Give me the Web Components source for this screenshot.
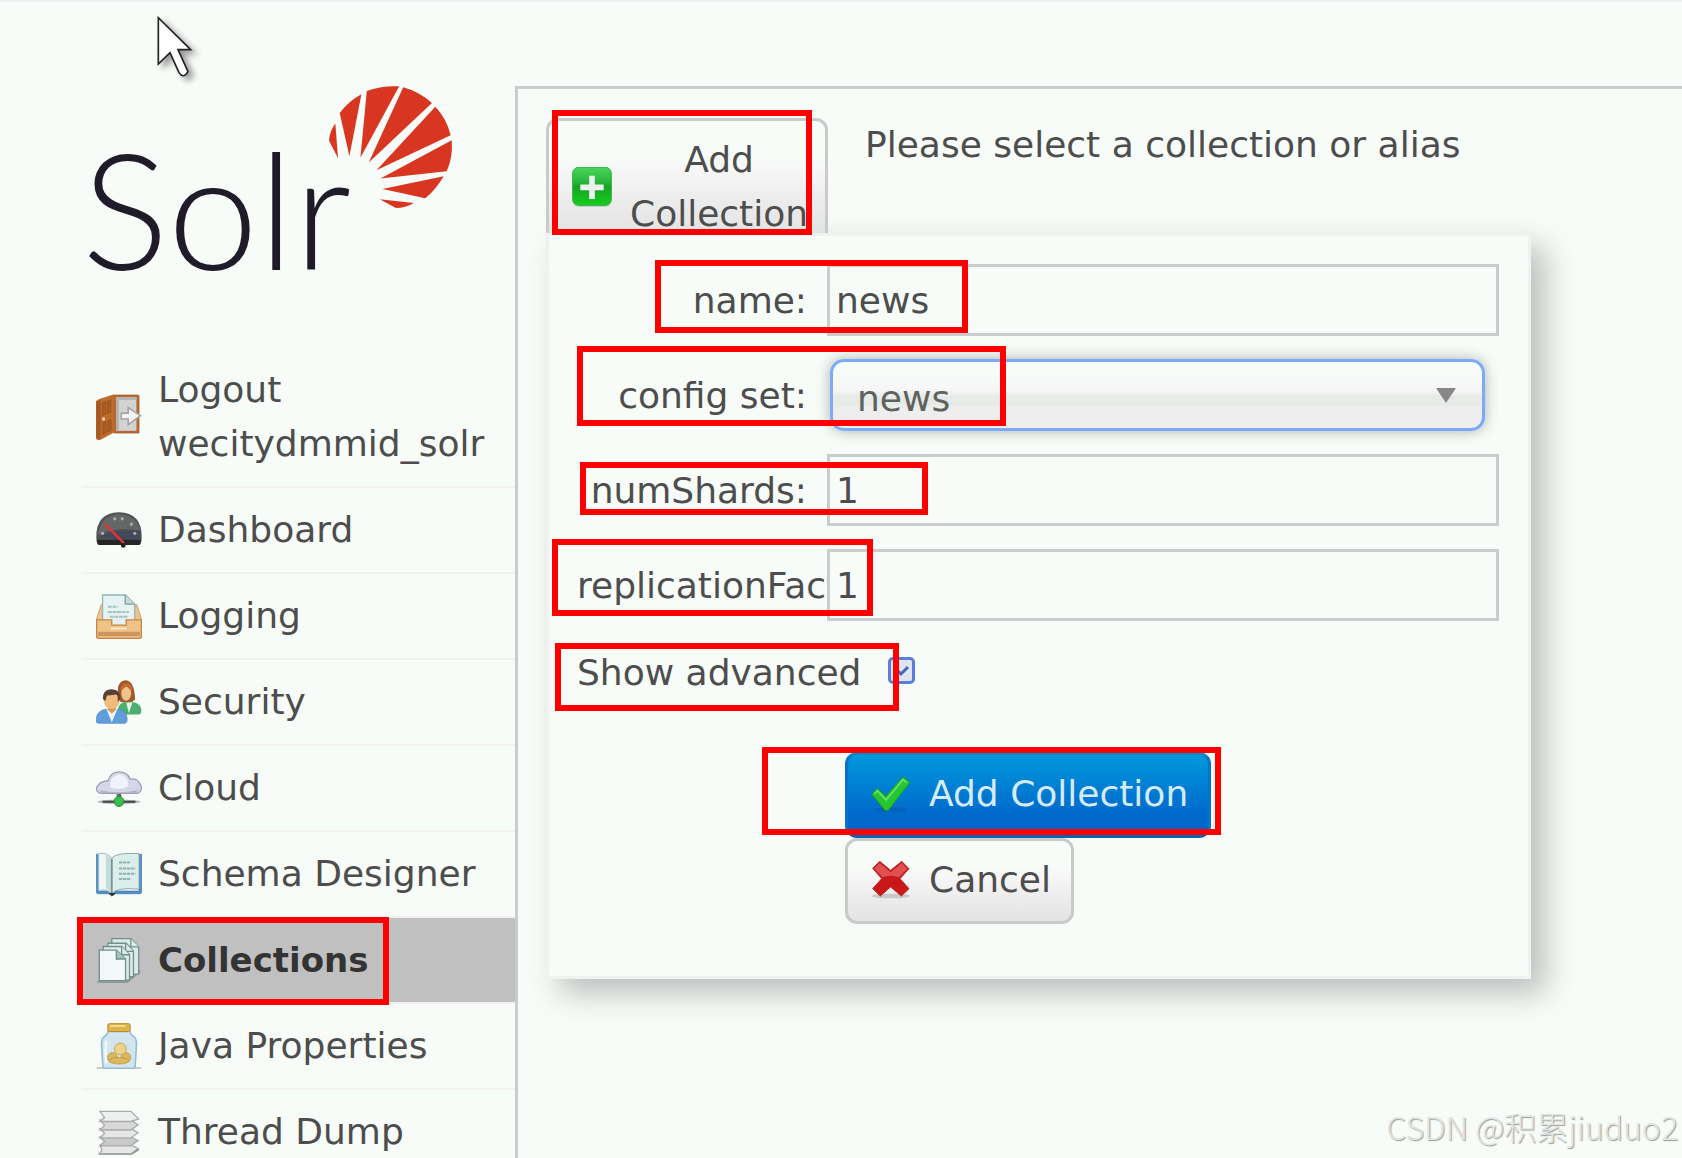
<!DOCTYPE html>
<html lang="en">
<head>
<meta charset="utf-8">
<title>Solr Admin</title>
<style>
  body {
    margin: 0;
    background: #f7fcf8;
    color: #4d4d4d;
    font: 36px/54px "DejaVu Sans", Verdana, sans-serif;
  }
</style>
</head>
<body>
<solr-app></solr-app>

<script>
const ICONS = {
  logout: `<svg viewBox="0 0 140 140">
    <path d="M55 3h72q4 0 4 4v112H55z" fill="#b86a34" stroke="#9a5527" stroke-width="2"/>
    <path d="M62 10h61v102H62z" fill="#d2d4d3"/>
    <path d="M62 10h61v8H70v94h-8z" fill="#b4b6b5"/>
    <path d="M0 22Q2 17 20 12L55 1v116L14 139q-14 3-14-5z" fill="#bd6b2b"/>
    <path d="M1 24L14 18v118q-12 4-13-4z" fill="#a55824"/>
    <path d="M20 26l10-3v38l-10 4zM35 21l10-3v38l-10 3zM21 88l10-4v34l-10 5zM36 82l10-4v33l-10 5z" fill="#a95d25" stroke="#95501f" stroke-width="2"/>
    <circle cx="23" cy="76" r="5" fill="#e5d5c5"/>
    <path d="M77 58h21V41l37 25-37 27V76H77z" fill="#f3f3f3" stroke="#a5a5a5" stroke-width="5"/>
  </svg>`,
  dashboard: `<svg viewBox="0 0 140 140">
    <path d="M1 92Q0 18 70 16q70 2 69 76 0 24-10 24H11Q1 116 1 92z" fill="#505352"/>
    <path d="M5 84Q16 23 70 22q52 1 64 50Q70 58 5 84z" fill="#646766"/>
    <path d="M6 92q45-25 126-20l3 28H80z" fill="#45475b"/>
    <path d="M3 100h134q-1 16-8 16H11q-8 0-8-16z" fill="#252525"/>
    <g fill="#aeb0b0"><circle cx="57" cy="36" r="5"/><circle cx="80" cy="36" r="5"/><circle cx="108" cy="52" r="5"/><circle cx="20" cy="80" r="5"/><circle cx="118" cy="80" r="5"/></g>
    <path d="M27 52l58 58" stroke="#e13535" stroke-width="7"/>
    <circle cx="83" cy="117" r="7" fill="#202020"/>
  </svg>`,
  logging: `<svg viewBox="0 0 140 140">
    <path d="M16 36h108l14 42v54q0 6-6 6H8q-6 0-6-6V78z" fill="#edc391" stroke="#d79a58" stroke-width="3"/>
    <path d="M20 6h70l28 29v66H20z" fill="#e6f3f2" stroke="#93b5b3" stroke-width="4"/>
    <path d="M89 6v28h28" fill="#c6dcd9" stroke="#7da09e" stroke-width="4"/>
    <path d="M36 42h30M36 58h64M42 72h55" stroke="#a7c3c1" stroke-width="6" stroke-dasharray="12 2"/>
    <path d="M2 82h46v16h44V82h46v50q0 6-6 6H8q-6 0-6-6z" fill="#efc28a" stroke="#c88541" stroke-width="4"/>
    <path d="M6 118h128v14H6z" fill="#ce965d"/>
    <path d="M45 108h48" stroke="#fff0cf" stroke-width="5"/>
  </svg>`,
  security: `<svg viewBox="0 0 140 140">
    <path d="M70 62Q57 7 91 4q26 2 28 58l-9 8H75z" fill="#a4572a"/>
    <path d="M68 108V86q6-17 26-17 44-1 44 27 0 12-8 12z" fill="#4caf70"/>
    <path d="M92 72l8 32 11-33" fill="#e4f7e7"/>
    <ellipse cx="92" cy="43" rx="15" ry="23" fill="#f0c18a"/>
    <path d="M75 38Q74 10 94 12q18 1 16 29-12-18-20-17-8 5-15 14" fill="#bf6b34"/>
    <path d="M1 132v-15q5-23 32-25h33q29 4 29 30 0 13-9 13H8z" fill="#619cdb" stroke="#4a85c6" stroke-width="2"/>
    <path d="M32 92l16 40 17-40" fill="#edf4fb"/>
    <path d="M36 78h24v16L48 105 36 94z" fill="#d99a59"/>
    <ellipse cx="48" cy="66" rx="24" ry="25" fill="#efbc7c"/>
    <path d="M21 61Q19 33 46 31q30-1 28 31l-8 8Q68 46 60 47q-20 3-27 3-2 12-5 17z" fill="#594038"/>
  </svg>`,
  cloud: `<svg viewBox="0 0 140 140">
    <ellipse cx="70" cy="112" rx="66" ry="7" fill="#bbb"/>
    <path d="M20 112h100" stroke="#454545" stroke-width="6"/>
    <path d="M70 84v28" stroke="#666" stroke-width="14"/>
    <path d="M12 86Q-6 77 6 62q10-13 30-14 9-27 35-27 24 0 33 22 19-4 29 13 13 19-5 30z" fill="#d6d6e8" stroke="#a0a0b5" stroke-width="4"/>
    <path d="M42 66q2-36 29-37 27 1 28 36-30 15-57 1z" fill="#f1f1fa"/>
    <path d="M12 76q58 14 116-1l-6 9H17z" fill="#b4b4c9"/>
    <circle cx="70" cy="111" r="15" fill="#39bd4b" stroke="#288538" stroke-width="3"/>
  </svg>`,
  schema: `<svg viewBox="0 0 140 140">
    <path d="M1 10h8v112h122V10h8v115q0 5-6 5H59l-11 7-9-7H7q-6 0-6-5z" fill="#548fce" stroke="#376fa8" stroke-width="2"/>
    <path d="M8 8Q34 3 48 21v108Q34 115 8 120z" fill="#edf7f5" stroke="#a1bbb8" stroke-width="3"/>
    <path d="M48 21Q64 4 131 8v108Q64 110 48 129z" fill="#dceeeb" stroke="#8caaa6" stroke-width="3"/>
    <path d="M30 9q14 0 18 13v105q-5-9-18-12z" fill="#c5dcd9"/>
    <path d="M70 35h35M70 53h50M70 69h50M70 85h35" stroke="#8fb3ae" stroke-width="6" stroke-dasharray="10 2"/>
    <path d="M48 24v106" stroke="#769590" stroke-width="5"/>
    <path d="M38 128l11 10 12-10" fill="#333"/>
  </svg>`,
  collections: `<svg viewBox="0 0 140 140">
    <path d="M4 137h90l40-34" fill="none" stroke="#969a99" stroke-width="7"/>
    <g fill="#dceae8" stroke="#6f918d" stroke-width="4">
      <path d="M48 5h58l24 25v83H48z"/><path d="M106 5v25h24"/>
      <path d="M36 19h56l22 24v78H36z"/><path d="M90 19v25h24"/>
      <path d="M22 29h56l24 24v78H22z"/><path d="M78 29v25h24"/>
      <path d="M10 40h52l28 27v66H10z" fill="#f1f8f7"/><path d="M62 40v27h28" fill="#a7c1bd"/>
    </g>
  </svg>`,
  java: `<svg viewBox="0 0 140 140">
    <path d="M2 137h136" stroke="#bbb" stroke-width="5"/>
    <path d="M36 26h68q0 10 14 18 6 6 5 25l-4 64q0 5-7 5H28q-7 0-7-5l-4-64q-1-19 5-25 14-8 14-18z" fill="#d3e6f0" stroke="#96bed0" stroke-width="5"/>
    <path d="M31 54q-4 34 0 70" stroke="#f2f9fc" stroke-width="8" fill="none"/>
    <rect x="36" y="2" width="68" height="24" rx="5" fill="#ddb44c" stroke="#b68928" stroke-width="3"/>
    <path d="M43 9h45" stroke="#f4dc8c" stroke-width="6"/>
    <g fill="#dcb75b" stroke="#b88f38" stroke-width="2"><circle cx="50" cy="105" r="15"/><circle cx="91" cy="105" r="15"/><circle cx="74" cy="79" r="18" fill="#ecd389"/><ellipse cx="70" cy="115" rx="30" ry="10"/></g>
  </svg>`,
  thread: `<svg viewBox="0 0 140 140">
    <path d="M8 136h100l22-14" stroke="#858585" stroke-width="6" fill="none"/>
    <g fill="#e7e7e7" stroke="#aaa" stroke-width="4">
      <path d="M12 110h94l22 10-22 16H12l6-13z"/><path d="M12 86h94l22 10-22 16H12l14-14z" fill="#c8cac9"/>
      <path d="M12 60h94l22 12-22 16H12l14-14z"/><path d="M12 34h94l22 14-22 16H12l14-14z" fill="#d8d8d8"/>
      <path d="M12 7h94l24 23-24 8H12l14-12z" fill="#eef0ef"/>
    </g>
  </svg>`,
  plus: `<svg viewBox="0 0 120 120">
    <defs><linearGradient id="g" x2="0" y2="1"><stop stop-color="#4ad65b"/><stop offset=".4" stop-color="#27b43b"/><stop offset=".5" stop-color="#15a322"/><stop offset="1" stop-color="#14ce1d"/></linearGradient></defs>
    <rect x="2" y="6" width="116" height="114" rx="18" fill="#c5ccc6"/>
    <rect x="2" y="1" width="116" height="114" rx="18" fill="url(#g)" stroke="#2eb23c" stroke-width="3"/>
    <path d="M60 26v70M25 61h70" stroke="#f0f0f0" stroke-width="17"/>
  </svg>`,
  tick: `<svg viewBox="0 0 120 120">
    <ellipse cx="60" cy="107" rx="48" ry="8" fill="#0562b7"/>
    <path d="M2 61l17-19 25 25L96 8l21 17-66 85h-8z" fill="#27c62f" stroke="#149a2e" stroke-width="3"/>
    <path d="M10 60l9-10 26 28L96 17l11 9" fill="none" stroke="#6be070" stroke-width="5"/>
  </svg>`,
  cross: `<svg viewBox="0 0 120 120">
    <ellipse cx="60" cy="108" rx="57" ry="7" fill="#c8c8c8"/>
    <path d="M5 25L26 4l33 27L92 4l22 22-27 30 27 30-23 22-32-27-31 27L5 86l27-30z" fill="#ca1717" stroke="#b53131" stroke-width="3"/>
    <path d="M9 25L26 9l33 28L92 9l17 17-25 26q-24-10-49 0z" fill="#df5151"/>
  </svg>`,
};

class SolrIcon extends HTMLElement {
  connectedCallback() {
    this.attachShadow({ mode: 'open' });
    this.shadowRoot.innerHTML = `
      <style>
        :host { display: block; flex: none; width: 46px; height: 46px; }
        :host([small]) { width: 40px; height: 40px; }
        svg { display: block; width: 100%; height: 100%; }
      </style>
      ${ICONS[this.getAttribute('name')]}
    `;
  }
}
customElements.define('solr-icon', SolrIcon);

class SolrLogo extends HTMLElement {
  connectedCallback() {
    this.attachShadow({ mode: 'open' });
    this.shadowRoot.innerHTML = `
      <style>
        :host { display: block; position: relative; height: 264px; }
        a {
          display: block;
          padding-top: 34px;
          color: #1f1b29;
          font: 300 162px/180px Lato, sans-serif;
          text-decoration: none;
        }
        svg { position: absolute; top: 0; left: 245px; width: 127px; height: 127px; }
      </style>
      <a href="#">Solr</a>
      <svg viewBox="800 250 380 380" fill="#d93621">
        <path d="M825 368Q808 390 806 420L833 472z"/>
        <path d="M838 337Q865 301 903 281L867 466z"/>
        <path d="M919 271Q963 254 1016 257L900 471z"/>
        <path d="M1028 260Q1076 273 1114 307L925 485z"/>
        <path d="M1124 318Q1157 352 1170 403L948 508z"/>
        <path d="M1173 418Q1178 467 1158 511L960 533z"/>
        <path d="M1149 526Q1125 567 1094 592L966 564z"/>
        <path d="M958 595L1060 606Q1035 621 1006 621z"/>
      </svg>
    `;
  }
}
customElements.define('solr-logo', SolrLogo);

class NavItem extends HTMLElement {
  connectedCallback() {
    this.attachShadow({ mode: 'open' });
    this.shadowRoot.innerHTML = `
      <style>
        :host { display: block; border-top: 2px solid #f3f2f1; }
        :host(:first-child) { border-top: 0; }
        a {
          display: flex;
          align-items: center;
          gap: 16px;
          padding: 15px 0 15px 14px;
          color: inherit;
          text-decoration: none;
        }
        :host([active]) a {
          background: #c0c0c0;
          color: #333;
          font-size: 34px;
          font-weight: bold;
        }
      </style>
      <a href="#"><solr-icon name="${this.getAttribute('icon')}"></solr-icon><span><slot></slot></span></a>
    `;
  }
}
customElements.define('nav-item', NavItem);

class SolrButton extends HTMLElement {
  connectedCallback() {
    this.attachShadow({ mode: 'open' });
    this.shadowRoot.innerHTML = `
      <style>
        :host { display: block; }
        button {
          display: flex;
          align-items: center;
          box-sizing: border-box;
          padding: 12px 20px 14px 23px;
          border: 3px solid #c8cbc9;
          border-radius: 12px;
          background: linear-gradient(#f7fcf8 30%, #f6f6f6 45%, #ececec 70%, #e2e4e2);
          color: inherit;
          font: inherit;
        }
        :host([primary]) button {
          border-color: #0588cf #0873ca #0663b8;
          background: linear-gradient(#0098dc, #0069cc 75%, #0064c8);
          color: #d5ebf7;
        }
        :host([tab]) button {
          align-items: flex-start;
          width: 282px;
          height: 115px;
          padding: 12px 20px 0 23px;
          border-bottom: 0;
          border-radius: 12px 12px 0 0;
          overflow: hidden;
        }
        .content { display: flex; align-items: center; gap: 18px; }
      </style>
      <button type="button">
        <span class="content"><solr-icon small name="${this.getAttribute('icon')}"></solr-icon><span><slot></slot></span></span>
      </button>
    `;
  }
}
customElements.define('solr-button', SolrButton);

class FormField extends HTMLElement {
  connectedCallback() {
    const value = this.getAttribute('value');
    const control = this.hasAttribute('select')
      ? `<span class="select"><select id="control"><option>${value}</option></select></span>`
      : `<input id="control" type="text" value="${value}">`;
    this.attachShadow({ mode: 'open' });
    this.shadowRoot.innerHTML = `
      <style>
        :host { display: flex; align-items: center; height: 72px; }
        label {
          flex: none;
          width: 230px;
          margin-right: 20px;
          padding-top: 2px;
          text-align: right;
          white-space: nowrap;
        }
        input, select {
          box-sizing: border-box;
          width: 100%;
          height: 72px;
          margin: 0;
          color: inherit;
          font: inherit;
          outline: 0;
        }
        input {
          flex: 1;
          min-width: 0;
          padding: 0 6px;
          border: 3px solid #cbcdcc;
          border-radius: 0;
          background: #f7fcf8;
        }
        .select { position: relative; flex: 1; margin: 0 14px 0 3px; }
        .select::after {
          content: "";
          position: absolute;
          top: 29px;
          right: 29px;
          width: 20px;
          height: 15px;
          background: #888;
          clip-path: polygon(0 0, 100% 0, 50% 100%);
        }
        select {
          display: block;
          appearance: none;
          padding: 8px 24px 0;
          border: 3px solid #7baaf7;
          border-radius: 14px;
          background: linear-gradient(#f7fcf8 20%, #f6f6f6 42%, #e7ebe7 52%, #e7ebe7 64%, #eee 70%);
          box-shadow: 0 0 14px rgba(0, 0, 0, 0.3);
          color: #5e6360;
        }
      </style>
      <label for="control"><slot></slot></label>
      ${control}
    `;
  }
}
customElements.define('form-field', FormField);

class CollectionPanel extends HTMLElement {
  connectedCallback() {
    this.attachShadow({ mode: 'open' });
    this.shadowRoot.innerHTML = `
      <style>
        :host { display: block; }
        form {
          display: flex;
          flex-direction: column;
          gap: 23px;
          padding: 28px 29px 52px 28px;
          border: 3px solid #f1f1f0;
          background: #f7fcf8;
          box-shadow: 14px 14px 28px #bcbfbd;
        }
        .advanced { display: flex; align-items: center; gap: 27px; padding-top: 2px; }
        .advanced input {
          appearance: none;
          width: 27px;
          height: 27px;
          margin: 0;
          border: 3px solid #5b7edb;
          border-radius: 5px;
          background: #e1e5f1;
        }
        .check { display: grid; padding-bottom: 6px; }
        .check > * { grid-area: 1 / 1; }
        .check svg { width: 27px; height: 27px; pointer-events: none; }
        .actions { padding: 29px 0 0 268px; }
      </style>
      <form>
        <form-field value="news">name:</form-field>
        <form-field select value="news">config set:</form-field>
        <form-field value="1">numShards:</form-field>
        <form-field value="1">replicationFactor:</form-field>
        <div class="advanced">
          <label for="advanced">Show advanced</label>
          <span class="check">
            <input id="advanced" type="checkbox" checked>
            <svg viewBox="0 0 27 27"><path d="M7 11l6 6 7-7" fill="none" stroke="#4467be" stroke-width="3"/></svg>
          </span>
        </div>
        <div class="actions">
          <solr-button primary icon="tick">Add Collection</solr-button>
          <solr-button icon="cross">Cancel</solr-button>
        </div>
      </form>
    `;
  }
}
customElements.define('collection-panel', CollectionPanel);

// red frame drawn over the page; box="left top width height"
class MarkBox extends HTMLElement {
  connectedCallback() {
    const [left, top, width, height] = this.getAttribute('box').split(' ');
    this.attachShadow({ mode: 'open' });
    this.shadowRoot.innerHTML = `
      <style>
        :host {
          position: absolute;
          left: ${left}px;
          top: ${top}px;
          width: ${width}px;
          height: ${height}px;
          box-sizing: border-box;
          border: 6px solid #f00;
          pointer-events: none;
        }
      </style>
    `;
  }
}
customElements.define('mark-box', MarkBox);

class SolrApp extends HTMLElement {
  connectedCallback() {
    this.attachShadow({ mode: 'open' });
    this.shadowRoot.innerHTML = `
      <style>
        :host {
          display: flex;
          position: relative;
          box-sizing: border-box;
          height: 100vh;
          border-top: 2px solid #eef1ef;
          overflow: hidden;
        }
        aside { flex: none; width: 433px; padding: 82px 0 0 82px; }
        main {
          flex: 1;
          margin-top: 84px;
          padding: 29px 0 0 28px;
          border: solid #cbcdcc;
          border-width: 3px 0 0 3px;
        }
        header { display: flex; gap: 37px; }
        p { margin: 0; }
        collection-panel { margin-right: 151px; }
        .cursor { position: absolute; left: 155px; top: 12px; width: 46px; height: 70px; filter: drop-shadow(5px 4px 3px #999); }
        .watermark {
          position: absolute;
          right: 4px;
          bottom: 10px;
          color: #e3e5e4;
          font: 300 32px/44px "Noto Sans CJK SC", sans-serif;
          text-shadow: 1px 1px 1px #999;
        }
      </style>
      <aside>
        <solr-logo></solr-logo>
        <nav>
          <nav-item icon="logout">Logout wecitydmmid_solr</nav-item>
          <nav-item icon="dashboard">Dashboard</nav-item>
          <nav-item icon="logging">Logging</nav-item>
          <nav-item icon="security">Security</nav-item>
          <nav-item icon="cloud">Cloud</nav-item>
          <nav-item icon="schema">Schema Designer</nav-item>
          <nav-item icon="collections" active>Collections</nav-item>
          <nav-item icon="java">Java Properties</nav-item>
          <nav-item icon="thread">Thread Dump</nav-item>
        </nav>
      </aside>
      <main>
        <header>
          <solr-button tab icon="plus">Add Collection</solr-button>
          <p>Please select a collection or alias</p>
        </header>
        <collection-panel></collection-panel>
      </main>
      <mark-box box="552 108 260 125"></mark-box>
      <mark-box box="655 258 313 73"></mark-box>
      <mark-box box="577 344 429 80"></mark-box>
      <mark-box box="580 460 348 53"></mark-box>
      <mark-box box="552 537 321 77"></mark-box>
      <mark-box box="555 641 344 68"></mark-box>
      <mark-box box="762 745 459 88"></mark-box>
      <mark-box box="77 915 312 88"></mark-box>
      <svg class="cursor" viewBox="285 42 138 210">
        <path d="M295 53V192L330 158L357 218Q370 238 384 215L354 149H392z" fill="#fff" stroke="#222" stroke-width="5"/>
      </svg>
      <div class="watermark">CSDN @积累jiuduo2</div>
    `;
  }
}
customElements.define('solr-app', SolrApp);
</script>
</body>
</html>
